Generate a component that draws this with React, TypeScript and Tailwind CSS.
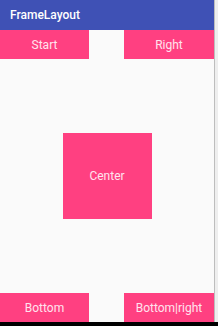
import React from "react";

const pink = "bg-[#ff4081] text-[#ffe3ee]";

export default function App() {
  return (
    <div className="w-[218px] h-[326px] flex flex-col bg-[#fafafa] overflow-hidden" style={{ fontFamily: "Roboto, 'Liberation Sans', sans-serif" }}>
      <div className="flex-1 flex">
        <div className="w-[214px] flex flex-col">
          {/* Toolbar */}
          <div className="h-[30px] bg-[#3f51b5] flex items-center px-[10px] text-white text-[12px] font-medium">
            FrameLayout
          </div>

          {/* Top row */}
          <div className="h-[29px] flex justify-between text-[12px]">
            <div className={`w-[89px] flex items-center justify-center ${pink}`}>Start</div>
            <div className={`w-[90px] flex items-center justify-center ${pink}`}>Right</div>
          </div>

          {/* Center */}
          <div className="flex-1 flex items-center justify-center">
            <div className={`w-[89px] h-[86px] flex items-center justify-center text-[12px] ${pink}`}>Center</div>
          </div>

          {/* Bottom row */}
          <div className="h-[29px] flex justify-between text-[12px]">
            <div className={`w-[89px] flex items-center justify-center ${pink}`}>Bottom</div>
            <div className={`w-[90px] flex items-center justify-center ${pink}`}>Bottom|right</div>
          </div>
        </div>
        <div className="w-[4px] flex">
          <div className="w-[1px] bg-[#bdbdbd]" />
          <div className="flex-1 bg-[#eeeeee]" />
        </div>
      </div>
      <div className="h-[4px] bg-black" />
    </div>
  );
}
